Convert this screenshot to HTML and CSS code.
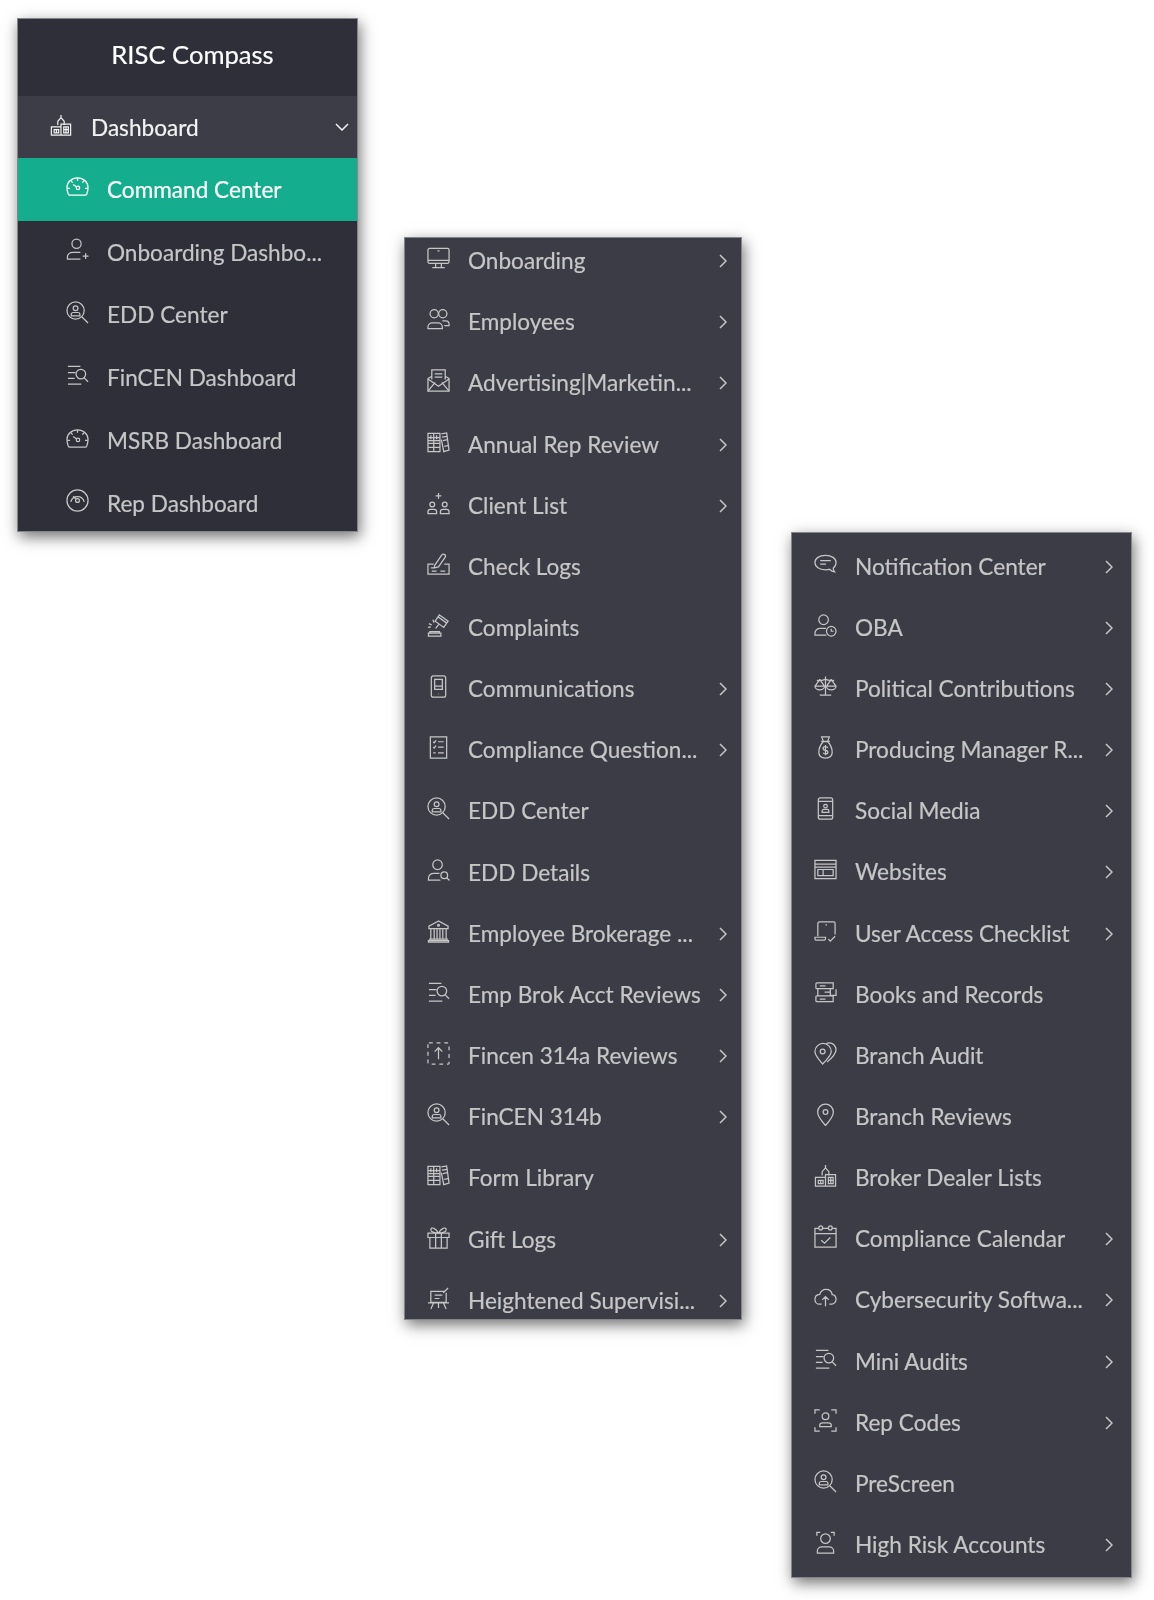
FILE: index.html
```html
<!DOCTYPE html>
<html lang="en">
<head>
    <meta charset="UTF-8">
    <title>RISC Compass</title>
    <link rel="stylesheet" href="styles.css">
</head>
<body>
    <!-- icon set -->
    <svg class="icon-defs" xmlns="http://www.w3.org/2000/svg">
        <symbol id="i-city" viewBox="0 0 24 24"><path d="M12 1v3M8.500 12V8L12 4l3.500 4v4"/><path d="M1.500 14h10.500v9H1.500zM12 11h10.500v12H12z"/><path d="M4.500 17h5v3.500h-5zM7 17v3.500M15 14h5v6.500h-5zM17.500 14v6.500M15 17h5"/></symbol>
        <symbol id="i-gauge" viewBox="0 0 24 24"><path d="M12 3C5.500 3 1 7.500 1 13c0 2.500.5 4.500 1.300 6.800.3.800.8 1.200 1.700 1.200h16c.9 0 1.400-.4 1.700-1.200.8-2.300 1.300-4.300 1.300-6.800C23 7.500 18.500 3 12 3z"/><path d="M12 3v3M5 6l2 2M19 6l-2 2M1.200 14h3M22.800 14h-3M11 12.500L7.500 10"/><circle cx="12.500" cy="13.500" r="1.800"/></symbol>
        <symbol id="i-user-plus" viewBox="0 0 24 24"><circle cx="11" cy="6" r="4.800"/><path d="M15 15H7c-3 0-5.500 2-5.500 4.500V22H15"/><path d="M17.500 19h6M20.500 16v6"/></symbol>
        <symbol id="i-edd" viewBox="0 0 24 24"><circle cx="10" cy="10" r="9"/><circle cx="10" cy="7.500" r="2.500"/><path d="M5.500 15.500V14c0-1.200 1-2 2-2h5c1 0 2 .8 2 2v1.500zM16.500 16.500L23 23"/></symbol>
        <symbol id="i-list" viewBox="0 0 24 24"><path d="M2 2.500h13M2 9h8M2 15h7M2 21h14"/><circle cx="15.500" cy="10.500" r="5"/><path d="M19 14.500l4 4"/></symbol>
        <symbol id="i-dial" viewBox="0 0 24 24"><circle cx="12" cy="12" r="11"/><path d="M5 13.500a7.200 7.200 0 0 1 14 0M10.500 10.500L7.500 7.500"/><circle cx="12" cy="12" r="2"/></symbol>
        <symbol id="i-monitor" viewBox="0 0 24 24"><rect x="1" y="1.500" width="22" height="15.500" rx="1.500"/><path d="M1 14h22M9 17v4M15 17v4M5.500 21.500h13M11 4h2"/></symbol>
        <symbol id="i-users" viewBox="0 0 24 24"><circle cx="7.500" cy="6" r="4.300"/><circle cx="16.500" cy="6" r="4.300"/><path d="M1 21.500V20c0-2.500 2-4.500 4.500-4.500h6c2.500 0 4.500 2 4.500 4.500v1.500z"/><path d="M16 13.500h3.500c2 0 3.500 1.500 3.500 3.500v1.500h-5"/></symbol>
        <symbol id="i-mail" viewBox="0 0 24 24"><path d="M5 11V1h14v10M5 7.500L1 10v13h22V10l-4-2.500"/><path d="M8 5h8M8 8.500h8M1 10.500L12 18l11-7.500M1 23l7.500-9M23 23l-7.500-9"/></symbol>
        <symbol id="i-books" viewBox="0 0 24 24"><path d="M1 2.500h6v19H1zM7 2.500h6.500v19H7zM15 3l5.500-1L23 20l-5.500 1.500L15 9"/><path d="M1 7h12.500M1 10h12.500M1 13h12.500M1 17h12.500M4 4.500v4M10 4.500v4M15.500 6.500l5.500-1M16.500 10l5-1M18 16l5-1"/></symbol>
        <symbol id="i-clients" viewBox="0 0 24 24"><path d="M12 1v6M9 4h6"/><circle cx="5.500" cy="13" r="2.500"/><circle cx="18.500" cy="13" r="2.500"/><path d="M1 22.500v-1.800c0-1.500 1-2.500 2.500-2.500h4c1.500 0 2.500 1 2.500 2.500v1.800zM14 22.500v-1.800c0-1.500 1-2.500 2.500-2.500h4c1.500 0 2.500 1 2.500 2.500v1.800z"/></symbol>
        <symbol id="i-check" viewBox="0 0 24 24"><path d="M7 11.500H1V22h22V11.500h-5"/><path d="M8 13L15.500 2c.7-1 2-1 3-.3s1 1.800.5 2.700L12 14.500l-4.500 1zM4 15.500h3M5 19h5M14 19h5"/></symbol>
        <symbol id="i-gavel" viewBox="0 0 24 24"><path d="M13 1l9 6.500-1.500 2-9-6.500zM11.500 3l-3 4.500 9 6.500 3-4.500M12.500 10.500L9 15"/><path d="M3 18.500h10V20H3zM1.500 20h13v3h-13zM2 10l3 1.500M1 14l3-.5M6 6l1.500 3"/></symbol>
        <symbol id="i-phone" viewBox="0 0 24 24"><rect x="4.500" y="1" width="15" height="22" rx="2"/><path d="M8 4.500h8v10.500H8zM8 11.500h8M12 19.500v.5"/></symbol>
        <symbol id="i-tasks" viewBox="0 0 24 24"><path d="M3.500 1h17v22h-17z"/><path d="M11.500 6h6M11.500 11.500h6M11.500 17.500h6M6.500 6l1 1 2-2.500M6.500 11.500l1 1 2-2.500M6.500 17.500h2.500"/></symbol>
        <symbol id="i-bank" viewBox="0 0 24 24"><path d="M12 1L2 6.500V9h20V6.500zM4 20V9M7.500 20V9M10.500 20V9M13.500 20V9M16.500 20V9M20 20V9"/><path d="M3 20h18v1.500H3zM1.500 21.500h21V23h-21z"/><circle cx="12" cy="5.500" r="1"/></symbol>
        <symbol id="i-user-find" viewBox="0 0 24 24"><circle cx="11" cy="6" r="5"/><path d="M13 15H7c-3 0-5.500 2-5.500 5v2H14"/><circle cx="18" cy="17" r="3.500"/><path d="M20.500 19.500l3 3"/></symbol>
        <symbol id="i-upload" viewBox="0 0 24 24"><rect x="1" y="1" width="22" height="22" rx="1" stroke-dasharray="4 4"/><path d="M12 18V6M8 10l4-4 4 4"/></symbol>
        <symbol id="i-gift" viewBox="0 0 24 24"><path d="M1 7.500h22V12H1zM3 12v11h18V12M9 7.500V23M15 7.500V23"/><path d="M12 7.500C9.500 2.500 4.500.5 4 3.500c-.4 2.500 3.500 4 8 4zM12 7.500c2.500-5 7.500-7 8-4 .4 2.500-3.500 4-8 4z"/></symbol>
        <symbol id="i-board" viewBox="0 0 24 24"><path d="M19 4.500H4V16h16V6M1 16.500h22M7 16.500L4 23M17 16.500l3 6.500M12 16.500V22M8 8.500h8M8 12h5M17 6l5-5"/></symbol>
        <symbol id="i-chat" viewBox="0 0 24 24"><path d="M12 2.500C5.500 2.500 1 5.500 1 10s4.500 7.500 11 7.500c1.500 0 3-.2 4.300-.5 1.500 1.500 3.500 2.500 5.200 2.800-.7-1-1.300-2.300-1.500-3.900 2-1.400 3-3.500 3-5.900 0-4.500-4.500-7.500-11-7.500z"/><path d="M6.500 8h11M6.500 11.500h6"/></symbol>
        <symbol id="i-user-clock" viewBox="0 0 24 24"><circle cx="10" cy="6" r="5"/><path d="M12.500 15H6.500C3.500 15 1 17 1 20v2h12"/><circle cx="18" cy="18" r="5"/><path d="M18 15.500V18h2.500"/></symbol>
        <symbol id="i-scale" viewBox="0 0 24 24"><path d="M12 1.500V21M6 21h12M3 5.500c3 .5 6 .5 9-1 3 1.500 6 1.500 9 1"/><path d="M6 4.500L1.500 11M6 4.500l4.500 6.500M18 4.500L13.500 11M18 4.500l4.500 6.500M1 11.500a5 4 0 0 0 10 0zM13 11.500a5 4 0 0 0 10 0z"/></symbol>
        <symbol id="i-bag" viewBox="0 0 24 24"><path d="M8 1h8l-2 5h-4zM7.500 5.500h9"/><path d="M9.500 6C6.500 9.500 5 13 5 17c0 4 2.500 6 7 6s7-2 7-6c0-4-1.500-7.500-4.500-11"/><path d="M14.500 12.500c-.5-1-1.500-1.300-2.500-1.300-1.500 0-2.500.8-2.500 1.900s1 1.700 2.500 1.900 2.500.8 2.500 1.900-1 1.800-2.500 1.800c-1 0-2-.4-2.500-1.200M12 9.500v10.500"/></symbol>
        <symbol id="i-phone-user" viewBox="0 0 24 24"><rect x="4.500" y="1" width="15" height="22" rx="2"/><path d="M4.500 4.500h15M4.500 19.500h15M8.500 16h7v-1.500c0-.8-.7-1.500-1.500-1.500h-4c-.8 0-1.500.7-1.500 1.500z"/><circle cx="12" cy="9.500" r="1.900"/></symbol>
        <symbol id="i-browser" viewBox="0 0 24 24"><path d="M1 2.500h22v19H1zM1 6.500h22M1 9.500h22M4 12h16v6.500H4zM9.500 12v6.500"/></symbol>
        <symbol id="i-laptop" viewBox="0 0 24 24"><path d="M4 17V3.500c0-.8.7-1.500 1.500-1.500h15c.8 0 1.500.7 1.500 1.500V15M1 18h11v1.500c0 .8-.7 1.500-1.500 1.500h-8C1.700 21 1 20.300 1 19.500zM15 20l2 2 5-5M12 5h1.500"/></symbol>
        <symbol id="i-stack" viewBox="0 0 24 24"><path d="M20 2H3a1 1 0 0 0-1 1v4a1 1 0 0 0 1 1h17zM4 8v7.500M23 8.500v6.500H17M20 15.500H3a1 1 0 0 0-1 1v4a1 1 0 0 0 1 1h17zM6 5h6M11 11.500h6M6 19h6M20 2v6M20 15v7M17 8v7.500"/></symbol>
        <symbol id="i-pins" viewBox="0 0 24 24"><path d="M9 23C4.500 18 1 14 1 10a8.500 8.500 0 0 1 17 0c0 4-4.500 8.500-9 13z"/><circle cx="9" cy="10" r="2.500"/><path d="M12.500 2.200C13.500 1.500 14.700 1 16 1c4 0 7 3.300 7 7 0 4-3.500 8-9.500 13"/></symbol>
        <symbol id="i-pin" viewBox="0 0 24 24"><path d="M12 23.500C7 18 3.800 13.500 3.800 9.500a8.200 8.200 0 0 1 16.400 0c0 4-3.200 8.500-8.200 14z"/><circle cx="12" cy="9.500" r="2.500"/></symbol>
        <symbol id="i-calendar" viewBox="0 0 24 24"><path d="M5 3.500H1V23h22V3.500h-4M9 3.500h6M1 9h22M7.500 16l3.500 3 6-6"/><circle cx="7" cy="3" r="2"/><circle cx="17" cy="3" r="2"/></symbol>
        <symbol id="i-cloud" viewBox="0 0 24 24"><path d="M8 19H6c-3 0-5-2.200-5-5s2-5 5-5.200C7 5.500 9.500 3.500 12.500 3.500c3.500 0 6 2.300 6.500 5.500 2.500.2 4 2.500 4 5s-2 5-4.500 5H16M12 21V11M8.500 14.500L12 11l3.500 3.500"/></symbol>
        <symbol id="i-scan" viewBox="0 0 24 24"><path d="M1 5V1h5M18 1h5v4M1 19v4h5M23 19v4h-5"/><circle cx="12" cy="7.500" r="3.500"/><path d="M6 18.500V17c0-1.500 1.200-2.500 3-2.500h6c1.800 0 3 1 3 2.500v1.500z"/></symbol>
        <symbol id="i-risk" viewBox="0 0 24 24"><path d="M3 5V1.500h3.500M17.500 1.500H21V5"/><circle cx="12" cy="8" r="5"/><path d="M3.500 23v-2c0-2.500 2-4.500 4.500-4.500h8c2.500 0 4.500 2 4.500 4.500v2z"/></symbol>
        <symbol id="i-right" viewBox="0 0 8 14"><path d="M1 1l6 6-6 6"/></symbol>
        <symbol id="i-down" viewBox="0 0 14 8"><path d="M1 1l6 6 6-6"/></symbol>
    </svg>

    <div class="canvas">
        <nav class="panel main-panel">
            <div class="panel-title">RISC Compass</div>
            <div class="row parent-row">
                <svg class="icon city-icon"><use href="#i-city"/></svg>
                <span class="label">Dashboard</span>
                <svg class="chev-down"><use href="#i-down"/></svg>
            </div>
            <div class="row sub-row active"><svg class="icon"><use href="#i-gauge"/></svg><span class="label">Command Center</span></div>
            <div class="row sub-row"><svg class="icon"><use href="#i-user-plus"/></svg><span class="label">Onboarding Dashbo...</span></div>
            <div class="row sub-row"><svg class="icon"><use href="#i-edd"/></svg><span class="label">EDD Center</span></div>
            <div class="row sub-row"><svg class="icon"><use href="#i-list"/></svg><span class="label">FinCEN Dashboard</span></div>
            <div class="row sub-row"><svg class="icon"><use href="#i-gauge"/></svg><span class="label">MSRB Dashboard</span></div>
            <div class="row sub-row"><svg class="icon"><use href="#i-dial"/></svg><span class="label">Rep Dashboard</span></div>
        </nav>

        <nav class="panel menu-panel menu-two">
            <div class="menu-scroll">
                <div class="row menu-row"><svg class="icon"><use href="#i-monitor"/></svg><span class="label">Onboarding</span><svg class="chev"><use href="#i-right"/></svg></div>
                <div class="row menu-row"><svg class="icon"><use href="#i-users"/></svg><span class="label">Employees</span><svg class="chev"><use href="#i-right"/></svg></div>
                <div class="row menu-row"><svg class="icon"><use href="#i-mail"/></svg><span class="label">Advertising|Marketin...</span><svg class="chev"><use href="#i-right"/></svg></div>
                <div class="row menu-row"><svg class="icon"><use href="#i-books"/></svg><span class="label">Annual Rep Review</span><svg class="chev"><use href="#i-right"/></svg></div>
                <div class="row menu-row"><svg class="icon"><use href="#i-clients"/></svg><span class="label">Client List</span><svg class="chev"><use href="#i-right"/></svg></div>
                <div class="row menu-row"><svg class="icon"><use href="#i-check"/></svg><span class="label">Check Logs</span></div>
                <div class="row menu-row"><svg class="icon"><use href="#i-gavel"/></svg><span class="label">Complaints</span></div>
                <div class="row menu-row"><svg class="icon"><use href="#i-phone"/></svg><span class="label">Communications</span><svg class="chev"><use href="#i-right"/></svg></div>
                <div class="row menu-row"><svg class="icon"><use href="#i-tasks"/></svg><span class="label">Compliance Question...</span><svg class="chev"><use href="#i-right"/></svg></div>
                <div class="row menu-row"><svg class="icon"><use href="#i-edd"/></svg><span class="label">EDD Center</span></div>
                <div class="row menu-row"><svg class="icon"><use href="#i-user-find"/></svg><span class="label">EDD Details</span></div>
                <div class="row menu-row"><svg class="icon"><use href="#i-bank"/></svg><span class="label">Employee Brokerage ...</span><svg class="chev"><use href="#i-right"/></svg></div>
                <div class="row menu-row"><svg class="icon"><use href="#i-list"/></svg><span class="label">Emp Brok Acct Reviews</span><svg class="chev"><use href="#i-right"/></svg></div>
                <div class="row menu-row"><svg class="icon"><use href="#i-upload"/></svg><span class="label">Fincen 314a Reviews</span><svg class="chev"><use href="#i-right"/></svg></div>
                <div class="row menu-row"><svg class="icon"><use href="#i-edd"/></svg><span class="label">FinCEN 314b</span><svg class="chev"><use href="#i-right"/></svg></div>
                <div class="row menu-row"><svg class="icon"><use href="#i-books"/></svg><span class="label">Form Library</span></div>
                <div class="row menu-row"><svg class="icon"><use href="#i-gift"/></svg><span class="label">Gift Logs</span><svg class="chev"><use href="#i-right"/></svg></div>
                <div class="row menu-row"><svg class="icon"><use href="#i-board"/></svg><span class="label">Heightened Supervisi...</span><svg class="chev"><use href="#i-right"/></svg></div>
            </div>
        </nav>

        <nav class="panel menu-panel menu-three">
            <div class="row menu-row"><svg class="icon"><use href="#i-chat"/></svg><span class="label">Notification Center</span><svg class="chev"><use href="#i-right"/></svg></div>
            <div class="row menu-row"><svg class="icon"><use href="#i-user-clock"/></svg><span class="label">OBA</span><svg class="chev"><use href="#i-right"/></svg></div>
            <div class="row menu-row"><svg class="icon"><use href="#i-scale"/></svg><span class="label">Political Contributions</span><svg class="chev"><use href="#i-right"/></svg></div>
            <div class="row menu-row"><svg class="icon"><use href="#i-bag"/></svg><span class="label">Producing Manager R...</span><svg class="chev"><use href="#i-right"/></svg></div>
            <div class="row menu-row"><svg class="icon"><use href="#i-phone-user"/></svg><span class="label">Social Media</span><svg class="chev"><use href="#i-right"/></svg></div>
            <div class="row menu-row"><svg class="icon"><use href="#i-browser"/></svg><span class="label">Websites</span><svg class="chev"><use href="#i-right"/></svg></div>
            <div class="row menu-row"><svg class="icon"><use href="#i-laptop"/></svg><span class="label">User Access Checklist</span><svg class="chev"><use href="#i-right"/></svg></div>
            <div class="row menu-row"><svg class="icon"><use href="#i-stack"/></svg><span class="label">Books and Records</span></div>
            <div class="row menu-row"><svg class="icon"><use href="#i-pins"/></svg><span class="label">Branch Audit</span></div>
            <div class="row menu-row"><svg class="icon"><use href="#i-pin"/></svg><span class="label">Branch Reviews</span></div>
            <div class="row menu-row"><svg class="icon"><use href="#i-city"/></svg><span class="label">Broker Dealer Lists</span></div>
            <div class="row menu-row"><svg class="icon"><use href="#i-calendar"/></svg><span class="label">Compliance Calendar</span><svg class="chev"><use href="#i-right"/></svg></div>
            <div class="row menu-row"><svg class="icon"><use href="#i-cloud"/></svg><span class="label">Cybersecurity Softwa...</span><svg class="chev"><use href="#i-right"/></svg></div>
            <div class="row menu-row"><svg class="icon"><use href="#i-list"/></svg><span class="label">Mini Audits</span><svg class="chev"><use href="#i-right"/></svg></div>
            <div class="row menu-row"><svg class="icon"><use href="#i-scan"/></svg><span class="label">Rep Codes</span><svg class="chev"><use href="#i-right"/></svg></div>
            <div class="row menu-row"><svg class="icon"><use href="#i-edd"/></svg><span class="label">PreScreen</span></div>
            <div class="row menu-row"><svg class="icon"><use href="#i-risk"/></svg><span class="label">High Risk Accounts</span><svg class="chev"><use href="#i-right"/></svg></div>
        </nav>
    </div>
</body>
</html>
```

FILE: styles.css
```css
body {
    margin: 0;
    height: 1600px;
    overflow: hidden;
    background: #fff;
    font-family: 'Lato', sans-serif;
}

.icon-defs {
    display: none;
}

.canvas {
    display: flex;
    align-items: flex-start;
    padding-left: 17px;
}

.panel {
    color: #c6c6c6;
    box-shadow: 2px 5px 14px rgba(0, 0, 0, 0.55);
    outline: 1px solid #85868b;
    outline-offset: -1px;
    filter: blur(0.35px);
}

.row {
    display: flex;
    align-items: center;
    box-sizing: border-box;
}

.label {
    flex: 1;
    padding-bottom: 1px;
    font-size: 22.6px;
    -webkit-text-stroke: 0.2px currentColor;
    white-space: nowrap;
}

.icon {
    width: 23px;
    height: 23px;
    margin: 0 18px 5px 0;
    flex: none;
    fill: none;
    stroke: currentColor;
    stroke-width: 1.3;
}

/* first panel */
.main-panel {
    width: 341px;
    height: 514px;
    margin-top: 18px;
    overflow: hidden;
    background: #2e2f38;
}

.main-panel .label {
    padding-bottom: 0;
}

.panel-title {
    height: 78px;
    line-height: 73px;
    padding-left: 10px;
    text-align: center;
    color: #fff;
    font-size: 25.6px;
    -webkit-text-stroke: 0.2px currentColor;
}

.parent-row {
    height: 62px;
    padding: 0 9px 0 33px;
    background: #3c3d47;
    color: #f2f2f2;
}

.city-icon {
    width: 22px;
    height: 22px;
    margin-right: 19px;
}

.chev-down {
    width: 14px;
    height: 8px;
    fill: none;
    stroke: currentColor;
    stroke-width: 1.5;
}

.sub-row {
    height: 62.8px;
    padding-left: 49px;
}

.active {
    background: #14ae8e;
    color: #fff;
}

/* the two floating menus */
.menu-panel {
    background: #3c3c46;
}

.menu-two {
    width: 338px;
    height: 1083px;
    margin: 237px 0 0 46px;
    overflow: hidden;
}

.menu-scroll {
    margin-top: -6.5px;
}

.menu-three {
    width: 341px;
    margin: 532px 0 0 49px;
    padding: 4px 0 2px;
}

.menu-row {
    height: 61.16px;
    padding: 0 15px 0 23px;
}

.menu-three .menu-row {
    padding-right: 19px;
}

.chev {
    width: 8px;
    height: 14px;
    flex: none;
    fill: none;
    stroke: currentColor;
    stroke-width: 1.5;
}
```
